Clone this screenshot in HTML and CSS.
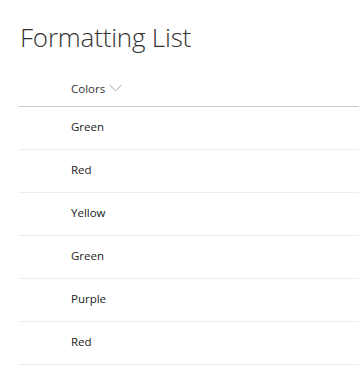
FILE: index.html
```html
<!DOCTYPE html>
<html lang="en">

<head>
    <meta charset="UTF-8">
    <meta name="viewport" content="width=device-width, initial-scale=1.0">
    <title>Formatting List</title>
    <link rel="stylesheet" href="styles.css">
</head>

<body>

    <div class="page">
        <h1 class="title">Formatting List</h1>

        <div class="list">
            <div class="list-header">
                <span class="col-name">Colors</span>
                <svg class="chevron" width="13" height="8" viewBox="0 0 13 8">
                    <path d="M0.5 0.8 L6.5 6.8 L12.5 0.8" fill="none" stroke="#a6a6a6" stroke-width="1"/>
                </svg>
            </div>

            <div class="list-row">Green</div>
            <div class="list-row">Red</div>
            <div class="list-row">Yellow</div>
            <div class="list-row">Green</div>
            <div class="list-row">Purple</div>
            <div class="list-row">Red</div>
        </div>
    </div>

</body>

</html>
```

FILE: styles.css
```css
* {
    margin: 0;
    padding: 0;
    box-sizing: border-box;
}

body {
    background: #fff;
    color: #333;
    font-family: 'Open Sans', 'Noto Sans', sans-serif;
}

.page {
    padding: 18px 0 0 19px;
}

.title {
    font-size: 26px;
    font-weight: 300;
    line-height: 38px;
    color: #333;
    margin-left: 1px;
    letter-spacing: -0.2px;
}

.list-header {
    display: flex;
    align-items: center;
    gap: 4px;
    height: 51px;
    padding: 23px 0 7px 52px;
    border-bottom: 1px solid #c8c8c8;
}

.col-name {
    font-size: 11.5px;
    line-height: 20px;
    color: #333;
}

.chevron {
    display: block;
    margin-top: -2px;
}

.list-row {
    display: flex;
    align-items: center;
    height: 43px;
    padding: 0 0 3px 52px;
    font-size: 11.5px;
    color: #222;
    border-bottom: 1px solid #ededed;
}
```
